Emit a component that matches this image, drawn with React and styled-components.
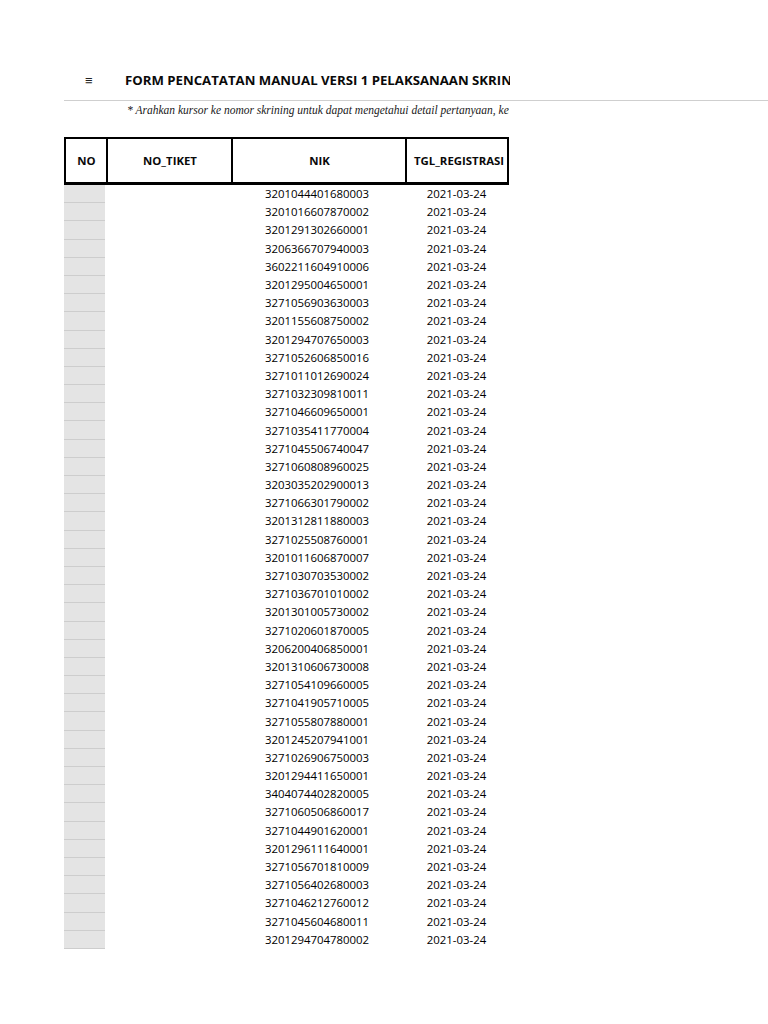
import React from "react";
import styled, { createGlobalStyle } from "styled-components";

const Global = createGlobalStyle`
  html, body { margin: 0; padding: 0; background: #fff; }
  body { font-family: "Open Sans", "Noto Sans", sans-serif; color: #111; }
`;

const Page = styled.div`
  width: 768px;
  min-height: 1024px;
  padding-top: 70px;
  box-sizing: border-box;
`;

const TitleBar = styled.div`
  display: flex;
  align-items: center;
  height: 20px;
  padding-left: 85px;
`;

const Burger = styled.span`
  width: 40px;
  font-size: 13px;
  font-weight: 700;
  line-height: 20px;
  color: #222;
`;

const Clip = styled.div`
  width: ${(p) => p.$w}px;
  overflow: hidden;
  white-space: nowrap;
`;

const Title = styled.div`
  font-family: "Open Sans", sans-serif;
  font-weight: 700;
  font-size: 13.2px;
  line-height: 20px;
  color: #0a0a0a;
`;

const Rule = styled.div`
  margin: 10px 0 0 64px;
  border-top: 1px solid #cfcfcf;
`;

const SubBar = styled.div`
  padding-left: 127px;
  height: 18px;
  display: flex;
  align-items: center;
`;

const Sub = styled.div`
  font-family: "Liberation Serif", "DejaVu Serif", serif;
  font-style: italic;
  font-size: 11.5px;
  line-height: 18px;
  color: #1a1a1a;
`;

const Table = styled.div`
  margin: 18px 0 0 64px;
  width: 445px;
`;

const cols = "41px 125px 174px 105px";

const Head = styled.div`
  display: grid;
  grid-template-columns: ${cols};
  height: 48px;
  box-sizing: border-box;
  border: 2px solid #000;
  border-bottom-width: 3px;
`;

const HeadCell = styled.div`
  display: flex;
  align-items: center;
  justify-content: center;
  font-weight: 700;
  font-size: 11.4px;
  color: #0a0a0a;
  border-left: ${(p) => (p.$first ? "none" : "2px solid #000")};
  margin-left: ${(p) => (p.$first ? "0" : "-1px")};
`;

const Row = styled.div`
  display: grid;
  grid-template-columns: ${cols};
  height: 18.2px;
`;

const NoCell = styled.div`
  background: #e4e4e4;
  border-bottom: 1px solid #cdcdcd;
  box-sizing: border-box;
`;

const Cell = styled.div`
  display: flex;
  align-items: center;
  justify-content: center;
  font-size: 11.4px;
  font-weight: 500;
  color: #000;
  margin-top: -1px;
`;

const niks = [
  "3201044401680003","3201016607870002","3201291302660001","3206366707940003",
  "3602211604910006","3201295004650001","3271056903630003","3201155608750002",
  "3201294707650003","3271052606850016","3271011012690024","3271032309810011",
  "3271046609650001","3271035411770004","3271045506740047","3271060808960025",
  "3203035202900013","3271066301790002","3201312811880003","3271025508760001",
  "3201011606870007","3271030703530002","3271036701010002","3201301005730002",
  "3271020601870005","3206200406850001","3201310606730008","3271054109660005",
  "3271041905710005","3271055807880001","3201245207941001","3271026906750003",
  "3201294411650001","3404074402820005","3271060506860017","3271044901620001",
  "3201296111640001","3271056701810009","3271056402680003","3271046212760012",
  "3271045604680011","3201294704780002",
];

export default function App() {
  return (
    <Page>
      <Global />
      <TitleBar>
        <Burger>≡</Burger>
        <Clip $w={385}>
          <Title>FORM PENCATATAN MANUAL VERSI 1 PELAKSANAAN SKRINING COVID-19</Title>
        </Clip>
      </TitleBar>
      <Rule />
      <SubBar>
        <Clip $w={382}>
          <Sub>* Arahkan kursor ke nomor skrining untuk dapat mengetahui detail pertanyaan, ketik jawaban</Sub>
        </Clip>
      </SubBar>
      <Table>
        <Head>
          <HeadCell $first>NO</HeadCell>
          <HeadCell>NO_TIKET</HeadCell>
          <HeadCell>NIK</HeadCell>
          <HeadCell>TGL_REGISTRASI</HeadCell>
        </Head>
        {niks.map((n) => (
          <Row key={n}>
            <NoCell />
            <Cell />
            <Cell>{n}</Cell>
            <Cell>2021-03-24</Cell>
          </Row>
        ))}
      </Table>
    </Page>
  );
}
